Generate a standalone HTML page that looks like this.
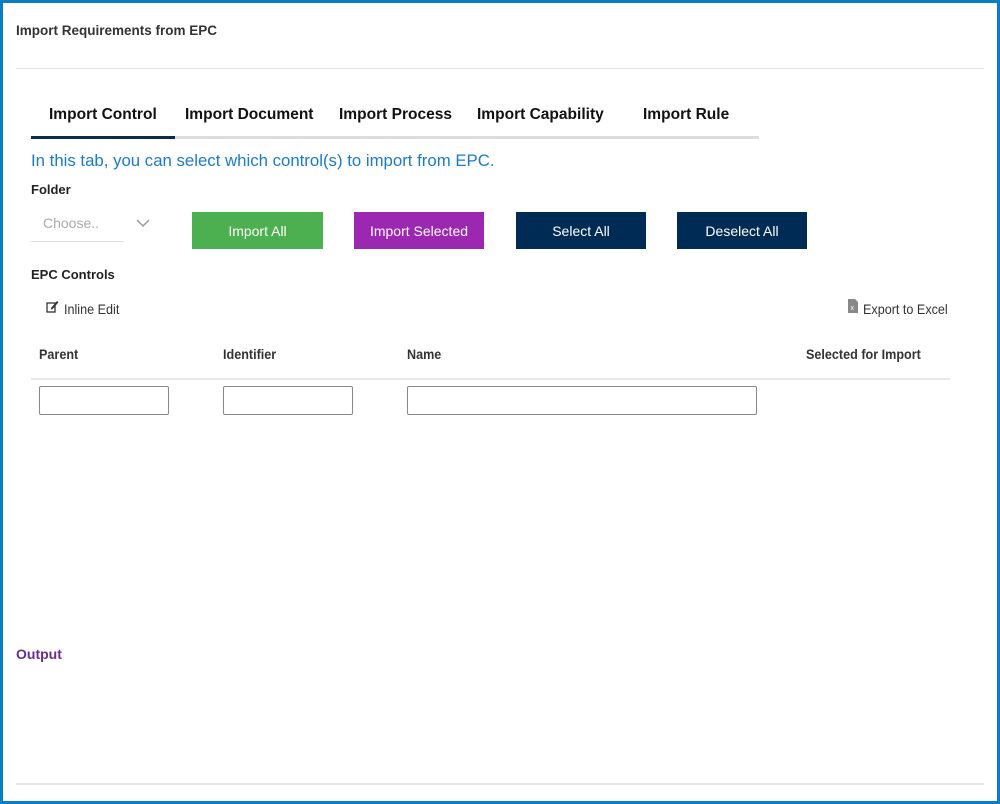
<!DOCTYPE html>
<html><head><meta charset="utf-8"><style>
*{box-sizing:border-box;margin:0;padding:0}
body{width:1000px;height:804px;background:#fff;font-family:"Liberation Sans",sans-serif;position:relative;overflow:hidden}
.frame{position:absolute;left:0;top:0;width:1000px;height:804px;border:3px solid #0b7dc2}
.a{position:absolute;white-space:nowrap}
.title{left:16px;top:23px;font-size:13.5px;font-weight:bold;color:#333}
.hr{position:absolute;left:16px;width:968px;height:1px;background:#e2e2e2}
.tab{top:106px;font-size:16px;font-weight:bold;color:#111;transform-origin:left;transform:scaleX(.97)}
.btn{position:absolute;top:212px;height:37px;color:#fff;font-size:14px;display:flex;align-items:center;justify-content:center}
.n{font-size:14px;color:#333;transform-origin:left;transform:scaleX(.9)}
.inp{position:absolute;top:386px;height:29px;border:1px solid #888;border-radius:2px}
</style></head><body>
<div class="frame"></div>
<div class="a title">Import Requirements from EPC</div>
<div class="hr" style="top:68px"></div>
<div class="a tab" style="left:49px">Import Control</div>
<div class="a tab" style="left:185px">Import Document</div>
<div class="a tab" style="left:339px">Import Process</div>
<div class="a tab" style="left:477px">Import Capability</div>
<div class="a tab" style="left:643px">Import Rule</div>
<div style="position:absolute;left:31px;top:136px;width:728px;height:3px;background:#ddd"></div>
<div style="position:absolute;left:31px;top:136px;width:144px;height:3px;background:#0b2c4f"></div>
<div class="a" style="left:31px;top:151px;font-size:16.8px;color:#1a7cc4">In this tab, you can select which control(s) to import from EPC.</div>
<div class="a" style="left:31px;top:182px;font-size:13px;font-weight:bold;color:#222">Folder</div>
<div class="a" style="left:43px;top:215px;font-size:14px;color:#aaa">Choose..</div>
<div style="position:absolute;left:31px;top:241px;width:93px;height:1px;background:#e0e0e0"></div>
<svg class="a" style="left:136px;top:219px" width="14" height="9" viewBox="0 0 14 9"><path d="M1 1l6 6 6-6" fill="none" stroke="#999" stroke-width="1.5"/></svg>
<div class="btn" style="left:192px;width:131px;background:#4caf50">Import All</div>
<div class="btn" style="left:354px;width:130px;background:#9c27b0">Import Selected</div>
<div class="btn" style="left:516px;width:130px;background:#002b54">Select All</div>
<div class="btn" style="left:677px;width:130px;background:#002b54">Deselect All</div>
<div class="a" style="left:31px;top:267px;font-size:13px;font-weight:bold;color:#222">EPC Controls</div>
<svg class="a" style="left:46px;top:300px" width="13" height="13" viewBox="0 0 13 13"><rect x="1" y="3" width="8" height="9" fill="none" stroke="#333" stroke-width="1.3"/><path d="M5 8l6-7 1.5 1.2-6 7H5z" fill="#333"/></svg>
<div class="a n" style="left:64px;top:301px">Inline Edit</div>
<svg class="a" style="left:848px;top:299px" width="10" height="14" viewBox="0 0 10 14"><path d="M0 0h7l3 3v11H0z" fill="#888"/><text x="2.5" y="11" font-size="7" fill="#fff" font-family="Liberation Sans">x</text></svg>
<div class="a n" style="left:863px;top:301px">Export to Excel</div>
<div class="a n" style="left:39px;top:346px;font-weight:bold">Parent</div>
<div class="a n" style="left:223px;top:346px;font-weight:bold">Identifier</div>
<div class="a n" style="left:407px;top:346px;font-weight:bold">Name</div>
<div class="a n" style="left:806px;top:346px;font-weight:bold">Selected for Import</div>
<div style="position:absolute;left:31px;top:378px;width:919px;height:2px;background:#e8e8e8"></div>
<div class="inp" style="left:39px;width:130px"></div>
<div class="inp" style="left:223px;width:130px"></div>
<div class="inp" style="left:407px;width:350px"></div>
<div class="a" style="left:16px;top:646px;font-size:14px;font-weight:bold;color:#6a2c91">Output</div>
<div class="hr" style="top:783px;height:2px;background:#e6e6e6"></div>
</body></html>
